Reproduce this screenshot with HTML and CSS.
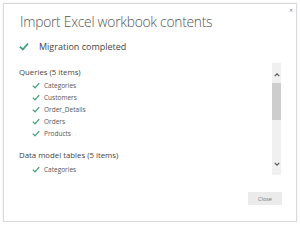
FILE: index.html
```html
<!DOCTYPE html>
<html>
<head>
<meta charset="utf-8">
<link rel="stylesheet" href="styles.css">
</head>
<body>
<div class="dialog">
  <span class="close-x">&#x2715;</span>
  <h1 class="title">Import Excel workbook contents</h1>
  <div class="status">
    <svg class="check big" viewBox="0 0 10 8"><path d="M1 4.2 L3.8 7 L9 1" /></svg>
    <span>Migration completed</span>
  </div>
  <div class="scroll-area">
    <div class="list">
      <div class="group">Queries (5 items)</div>
      <div class="item"><svg class="check" viewBox="0 0 10 8"><path d="M1 4.2 L3.8 7 L9 1" /></svg><span>Categories</span></div>
      <div class="item"><svg class="check" viewBox="0 0 10 8"><path d="M1 4.2 L3.8 7 L9 1" /></svg><span>Customers</span></div>
      <div class="item"><svg class="check" viewBox="0 0 10 8"><path d="M1 4.2 L3.8 7 L9 1" /></svg><span>Order_Details</span></div>
      <div class="item"><svg class="check" viewBox="0 0 10 8"><path d="M1 4.2 L3.8 7 L9 1" /></svg><span>Orders</span></div>
      <div class="item"><svg class="check" viewBox="0 0 10 8"><path d="M1 4.2 L3.8 7 L9 1" /></svg><span>Products</span></div>
      <div class="group second">Data model tables (5 items)</div>
      <div class="item"><svg class="check" viewBox="0 0 10 8"><path d="M1 4.2 L3.8 7 L9 1" /></svg><span>Categories</span></div>
    </div>
    <div class="scrollbar">
      <svg class="arrow up" viewBox="0 0 8 5"><path d="M1 4 L4 1 L7 4" /></svg>
      <div class="thumb"></div>
      <div class="track"></div>
      <svg class="arrow down" viewBox="0 0 8 5"><path d="M1 1 L4 4 L7 1" /></svg>
    </div>
  </div>
  <div class="footer">
    <button class="btn">Close</button>
  </div>
</div>
</body>
</html>
```

FILE: styles.css
```css
html, body {
  margin: 0;
  padding: 0;
  background: #ffffff;
}
body {
  font-family: "Open Sans", "Noto Sans", sans-serif;
  color: #444;
}
.dialog {
  position: relative;
  box-sizing: border-box;
  margin: 3px 0 0 3px;
  width: 294px;
  height: 219px;
  border: 1px solid #d9d9d9;
  box-shadow: 0 0 2px rgba(0,0,0,0.08);
  display: flex;
  flex-direction: column;
}
.close-x {
  position: absolute;
  top: 3px;
  right: 3px;
  font-size: 5px;
  color: #777;
}
.title {
  margin: 8px 0 0 16px;
  font-weight: 300;
  font-size: 13.8px;
  letter-spacing: -0.25px;
  color: #555;
  line-height: 20px;
}
.status {
  display: flex;
  align-items: center;
  margin: 7px 0 0 15px;
  font-size: 9px;
  color: #444;
  height: 14px;
}
.check {
  width: 8px;
  height: 7px;
  fill: none;
  stroke: #3f9c77;
  stroke-width: 1.6;
  flex: none;
}
.check.big {
  width: 10px;
  height: 9px;
  stroke-width: 1.8;
  margin-right: 10px;
}
.scroll-area {
  display: flex;
  margin: 10px 15px 0 15px;
  height: 112px;
}
.list {
  flex: 1;
  overflow: hidden;
}
.group {
  height: 12px;
  line-height: 12px;
  margin: 3px 0 1px;
  color: #444;
  font-size: 7.8px;
}
.group.second {
  margin: 10px 0 2px;
}
.item {
  display: flex;
  align-items: center;
  height: 12px;
  margin-left: 13px;
  color: #555;
  font-size: 6.5px;
}
.item .check {
  margin-right: 4px;
}
.scrollbar {
  width: 9px;
  background: #f0f0f0;
  display: flex;
  flex-direction: column;
  align-items: center;
}
.arrow {
  width: 6px;
  height: 4px;
  fill: none;
  stroke: #555;
  stroke-width: 1.5;
  flex: none;
}
.arrow.up {
  margin: 10px 0 6px;
}
.arrow.down {
  margin: 0 0 9px;
}
.thumb {
  width: 9px;
  height: 37px;
  background: #cdcdcd;
}
.track {
  flex: 1;
}
.footer {
  display: flex;
  justify-content: flex-end;
  margin: 17px 14px 0 0;
}
.btn {
  width: 34px;
  height: 13px;
  padding: 0;
  border: 0;
  background: #ebebeb;
  color: #777;
  font-family: "Open Sans", sans-serif;
  font-size: 5.5px;
}
```
